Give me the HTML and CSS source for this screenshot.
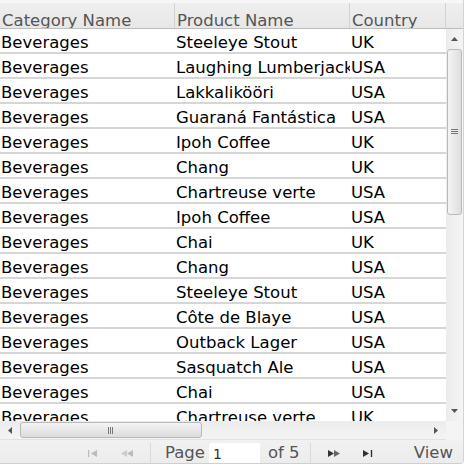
FILE: index.html
```html
<!DOCTYPE html>
<html>
<head>
<meta charset="utf-8">
<link rel="stylesheet" href="styles.css">
</head>
<body>
<div class="grid">
  <div class="header">
    <div class="hcell c1">Category Name</div>
    <div class="hcell c2">Product Name</div>
    <div class="hcell c3">Country</div>
    <div class="hfill"></div>
  </div>
  <div class="main">
    <div class="content">
      <div class="row"><div class="cell c1">Beverages</div><div class="cell c2">Steeleye Stout</div><div class="cell c3">UK</div></div>
      <div class="row"><div class="cell c1">Beverages</div><div class="cell c2">Laughing Lumberjack Lager</div><div class="cell c3">USA</div></div>
      <div class="row"><div class="cell c1">Beverages</div><div class="cell c2">Lakkalikööri</div><div class="cell c3">USA</div></div>
      <div class="row"><div class="cell c1">Beverages</div><div class="cell c2">Guaraná Fantástica</div><div class="cell c3">USA</div></div>
      <div class="row"><div class="cell c1">Beverages</div><div class="cell c2">Ipoh Coffee</div><div class="cell c3">UK</div></div>
      <div class="row"><div class="cell c1">Beverages</div><div class="cell c2">Chang</div><div class="cell c3">UK</div></div>
      <div class="row"><div class="cell c1">Beverages</div><div class="cell c2">Chartreuse verte</div><div class="cell c3">USA</div></div>
      <div class="row"><div class="cell c1">Beverages</div><div class="cell c2">Ipoh Coffee</div><div class="cell c3">USA</div></div>
      <div class="row"><div class="cell c1">Beverages</div><div class="cell c2">Chai</div><div class="cell c3">UK</div></div>
      <div class="row"><div class="cell c1">Beverages</div><div class="cell c2">Chang</div><div class="cell c3">USA</div></div>
      <div class="row"><div class="cell c1">Beverages</div><div class="cell c2">Steeleye Stout</div><div class="cell c3">USA</div></div>
      <div class="row"><div class="cell c1">Beverages</div><div class="cell c2">Côte de Blaye</div><div class="cell c3">USA</div></div>
      <div class="row"><div class="cell c1">Beverages</div><div class="cell c2">Outback Lager</div><div class="cell c3">USA</div></div>
      <div class="row"><div class="cell c1">Beverages</div><div class="cell c2">Sasquatch Ale</div><div class="cell c3">USA</div></div>
      <div class="row"><div class="cell c1">Beverages</div><div class="cell c2">Chai</div><div class="cell c3">USA</div></div>
      <div class="row"><div class="cell c1">Beverages</div><div class="cell c2">Chartreuse verte</div><div class="cell c3">UK</div></div>
    </div>
    <div class="vscroll">
      <div class="arrow">
        <svg width="7" height="4" viewBox="0 0 7 4"><path d="M0 4 L3.5 0 L7 4 Z" fill="#555"/></svg>
      </div>
      <div class="vthumb">
        <svg width="7" height="6" viewBox="0 0 7 6"><path d="M0 0.5 H7 M0 2.5 H7 M0 4.5 H7" stroke="#777" stroke-width="1"/></svg>
      </div>
      <div class="vspace"></div>
      <div class="arrow">
        <svg width="7" height="4" viewBox="0 0 7 4"><path d="M0 0 L3.5 4 L7 0 Z" fill="#555"/></svg>
      </div>
    </div>
  </div>
  <div class="hscroll">
    <div class="harrow">
      <svg width="4" height="7" viewBox="0 0 4 7"><path d="M4 0 L0 3.5 L4 7 Z" fill="#555"/></svg>
    </div>
    <div class="hthumb">
      <svg width="6" height="7" viewBox="0 0 6 7"><path d="M0.5 0 V7 M2.5 0 V7 M4.5 0 V7" stroke="#777" stroke-width="1"/></svg>
    </div>
    <div class="hspace"></div>
    <div class="harrow">
      <svg width="4" height="7" viewBox="0 0 4 7"><path d="M0 0 L4 3.5 L0 7 Z" fill="#555"/></svg>
    </div>
    <div class="corner"></div>
  </div>
  <div class="pager">
    <div class="pbtn">
      <svg width="10" height="7" viewBox="0 0 10 7"><path d="M0.5 0 V7" stroke="#bbb" stroke-width="1.4"/><path d="M9 0 L3 3.5 L9 7 Z" fill="#bbb"/></svg>
    </div>
    <div class="pbtn">
      <svg width="12" height="7" viewBox="0 0 12 7"><path d="M6 0 L0 3.5 L6 7 Z" fill="#ccc"/><path d="M12 0 L6 3.5 L12 7 Z" fill="#bbb"/></svg>
    </div>
    <div class="psep"></div>
    <div class="plabel">Page</div>
    <div class="pinput">1</div>
    <div class="plabel">of 5</div>
    <div class="psep"></div>
    <div class="pbtn">
      <svg width="12" height="7" viewBox="0 0 12 7"><path d="M0 0 L6 3.5 L0 7 Z" fill="#333"/><path d="M6 0 L12 3.5 L6 7 Z" fill="#666"/></svg>
    </div>
    <div class="pbtn">
      <svg width="10" height="7" viewBox="0 0 10 7"><path d="M0 0 L6 3.5 L0 7 Z" fill="#333"/><path d="M8.5 0 V7" stroke="#333" stroke-width="1.4"/></svg>
    </div>
    <div class="pview">View</div>
  </div>
</div>
</body>
</html>
```

FILE: styles.css
```css
html, body {
  margin: 0;
  padding: 0;
  background: #ffffff;
}

body {
  font-family: "DejaVu Sans", Verdana, sans-serif;
  font-size: 16.5px;
  color: #000;
}

.grid {
  width: 464px;
  height: 464px;
  border-right: 1px solid #d4d4d4;
  border-bottom: 1px solid #cfcfcf;
  border-bottom-right-radius: 4px;
  box-sizing: border-box;
  overflow: hidden;
  display: flex;
  flex-direction: column;
  background: #f2f2f2;
}

.header {
  display: flex;
  height: 29px;
  flex: none;
  box-sizing: border-box;
  border-top: 3px solid #f7f7f7;
  border-bottom: 1px solid #bdbdbd;
  background: linear-gradient(#efefef, #e7e7e7);
}

.hcell {
  box-sizing: border-box;
  height: 25px;
  padding: 5px 0 0 2px;
  line-height: 25px;
  color: #555;
  white-space: nowrap;
  overflow: hidden;
  border-right: 1px solid #d2d2d2;
}

.c1 { width: 175px; flex: none; }
.c2 { width: 175px; flex: none; }
.c3 { width: 96px; flex: none; }

.hfill {
  flex: 1;
}

.main {
  display: flex;
  height: 392px;
  flex: none;
}

.content {
  width: 446px;
  flex: none;
  background: #fff;
  overflow: hidden;
}

.row {
  display: flex;
  align-items: flex-start;
  height: 25px;
  box-sizing: border-box;
  border-bottom: 2px solid #d6d6d6;
}

.cell {
  box-sizing: border-box;
  padding: 2px 0 0 1px;
  line-height: 24px;
  white-space: nowrap;
  overflow-x: clip;
}

.vscroll {
  width: 17px;
  flex: none;
  display: flex;
  flex-direction: column;
  align-items: center;
  background: linear-gradient(90deg, #ececec, #f5f5f5);
}

.arrow {
  height: 20px;
  flex: none;
  display: flex;
  align-items: center;
  justify-content: center;
}

.vthumb {
  width: 15px;
  height: 166px;
  flex: none;
  box-sizing: border-box;
  border: 1px solid #b9b9b9;
  border-radius: 3px;
  background: linear-gradient(90deg, #f4f4f4, #dedede);
  display: flex;
  align-items: center;
  justify-content: center;
}

.vspace {
  flex: 1;
}

.hscroll {
  height: 19px;
  flex: none;
  display: flex;
  align-items: center;
  background: linear-gradient(#ececec, #f4f4f4);
  border-bottom: 1px solid #e2e2e2;
  box-sizing: border-box;
}

.harrow {
  width: 20px;
  height: 19px;
  flex: none;
  display: flex;
  align-items: center;
  justify-content: center;
}

.hthumb {
  width: 182px;
  height: 16px;
  flex: none;
  box-sizing: border-box;
  border: 1px solid #b9b9b9;
  border-radius: 3px;
  background: linear-gradient(#f4f4f4, #dcdcdc);
  display: flex;
  align-items: center;
  justify-content: center;
}

.hspace {
  flex: 1;
}

.corner {
  width: 17px;
  height: 19px;
  flex: none;
  background: #f4f4f4;
}

.pager {
  flex: 1;
  display: flex;
  align-items: center;
  background: linear-gradient(#f1f1f1, #ececec);
  color: #555;
  padding-left: 76px;
  padding-top: 2px;
  box-sizing: border-box;
}

.pbtn {
  width: 34px;
  height: 22px;
  flex: none;
  display: flex;
  align-items: center;
  justify-content: center;
}

.psep {
  width: 1px;
  height: 20px;
  flex: none;
  background: #dadada;
  margin: 0 6px;
}

.plabel {
  line-height: 22px;
  padding: 0 4px 0 8px;
  white-space: nowrap;
}

.pinput {
  width: 51px;
  height: 21px;
  box-sizing: border-box;
  background: #fff;
  border-radius: 2px;
  font-size: 14px;
  line-height: 22px;
  padding-left: 4px;
  color: #333;
}

.pview {
  margin-left: auto;
  padding-right: 10px;
  line-height: 22px;
}
```
